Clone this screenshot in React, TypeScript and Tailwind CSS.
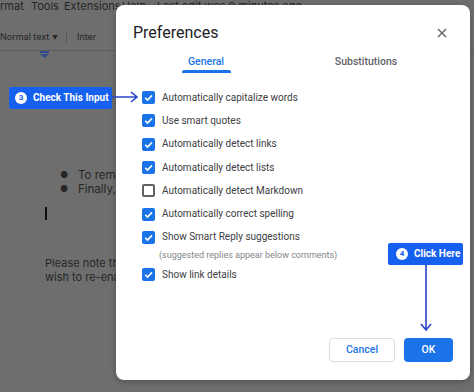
import React from "react";

const items: { label: string; checked: boolean }[] = [
  { label: "Automatically capitalize words", checked: true },
  { label: "Use smart quotes", checked: true },
  { label: "Automatically detect links", checked: true },
  { label: "Automatically detect lists", checked: true },
  { label: "Automatically detect Markdown", checked: false },
  { label: "Automatically correct spelling", checked: true },
  { label: "Show Smart Reply suggestions", checked: true },
];

function Box({ checked }: { checked: boolean }) {
  if (!checked)
    return <div className="w-[13px] h-[13px] rounded-[2px] border-2 border-[#5f6368] shrink-0" />;
  return (
    <div className="w-[13px] h-[13px] rounded-[2px] bg-[#1a73e8] shrink-0 flex items-center justify-center">
      <svg width="13" height="13" viewBox="0 0 13 13">
        <path d="M3.2 6.8l2.3 2.3L10 4.4" fill="none" stroke="white" strokeWidth="1.6" />
      </svg>
    </div>
  );
}

function Row({ label, checked }: { label: string; checked: boolean }) {
  return (
    <div className="h-[23.3px] flex items-center gap-[7px]">
      <Box checked={checked} />
      <span className="text-[10px] text-[#3c4043] leading-none">{label}</span>
    </div>
  );
}

export default function App() {
  return (
    <div className="relative w-[474px] h-[392px] overflow-hidden bg-[#6e6e6e] font-['Roboto',sans-serif]">
      {/* background document */}
      <div className="flex flex-col text-[#262626] font-['Inter',sans-serif]">
        <div className="-mt-[1px] h-[14px] flex items-center text-[11px] whitespace-nowrap">
          <span className="w-[31px]">rmat</span>
          <span className="w-[33px]">Tools</span>
          <span className="w-[58px]">Extensions</span>
          <span className="w-[35px]">Help</span>
          <span>Last edit was 9 minutes ago</span>
        </div>
        <div className="mt-[17px] h-[14px] flex items-center text-[9px] whitespace-nowrap">
          <span className="w-[52px]">Normal text</span>
          <span className="text-[6px] w-[14px]">▼</span>
          <span className="w-px h-[12px] bg-[#5a5a5a] mr-[10px]" />
          <span>Inter</span>
        </div>
        <div className="mt-[6px] h-px bg-[#5e5e5e]" />
        <div className="h-[8px] pl-[40px] flex items-start">
          <svg width="9" height="7" viewBox="0 0 9 7">
            <rect x="0" y="0" width="9" height="2" fill="#2d4a8a" />
            <path d="M0 3h9L4.5 7z" fill="#2d4a8a" />
          </svg>
        </div>
        <div className="mt-[109px] ml-[60px] w-[56px] overflow-hidden flex flex-col text-[11.5px] leading-[14px] whitespace-nowrap">
          <div className="flex items-center"><span className="w-[18px] shrink-0 text-[9px]">●</span>To remo</div>
          <div className="flex items-center"><span className="w-[18px] shrink-0 text-[9px]">●</span>Finally, c</div>
        </div>
        <div className="mt-[11px] ml-[45px] w-[1.5px] h-[13px] bg-[#111]" />
        <div className="mt-[36px] ml-[45px] w-[71px] overflow-hidden text-[11px] leading-[14px] whitespace-nowrap">
          <div>Please note that</div>
          <div>wish to re-enable</div>
        </div>
      </div>

      {/* dialog */}
      <div className="absolute left-[116px] top-[5px] w-[354px] h-[375px] bg-white rounded-[8px] shadow-[0_2px_6px_rgba(0,0,0,0.25)] flex flex-col">
        <div className="pt-[16px] pl-[17px] pr-[23px] flex items-center justify-between">
          <span className="text-[16px] leading-[24px] text-[#202124]">Preferences</span>
          <svg width="10" height="10" viewBox="0 0 10 10">
            <path d="M1 1l8 8M9 1l-8 8" stroke="#5f6368" strokeWidth="1.4" />
          </svg>
        </div>
        <div className="mt-[7px] pl-[10px] flex">
          <div className="relative w-[160px] h-[21px] flex justify-center pt-[2px]">
            <span className="text-[10.5px] leading-[16px] font-medium text-[#1a73e8]">General</span>
            <div className="absolute bottom-0 left-[56px] w-[49px] h-[3px] rounded-t-[2px] bg-[#1a73e8]" />
          </div>
          <div className="w-[160px] h-[21px] flex justify-center pt-[2px]">
            <span className="text-[10.5px] leading-[16px] font-medium text-[#5f6368]">Substitutions</span>
          </div>
        </div>
        <div className="mt-[13px] pl-[26px] flex flex-col">
          {items.map((it) => (
            <Row key={it.label} label={it.label} checked={it.checked} />
          ))}
          <div className="h-[12px] pl-[17px] text-[9px] leading-[12px] text-[#80868b]">
            (suggested replies appear below comments)
          </div>
          <div className="mt-[2px]">
            <Row label="Show link details" checked />
          </div>
        </div>
        <div className="mt-auto pb-[18px] pr-[17px] flex justify-end gap-[9px]">
          <div className="w-[66px] h-[24px] rounded-[4px] border border-[#dadce0] flex items-center justify-center text-[10.5px] font-medium text-[#1a73e8]">
            Cancel
          </div>
          <div className="w-[49px] h-[24px] rounded-[4px] bg-[#1a73e8] flex items-center justify-center text-[10.5px] font-medium text-white">
            OK
          </div>
        </div>
      </div>

      {/* annotation 3 */}
      <div className="absolute left-[9px] top-[87px] w-[103px] h-[22px] rounded-[2px] bg-[#1660f0] flex items-center pl-[6px] gap-[6px]">
        <div className="w-[12px] h-[12px] rounded-full bg-white flex items-center justify-center text-[8px] font-bold text-[#1660f0] leading-none">3</div>
        <span className="text-[10px] font-bold text-white leading-none whitespace-nowrap">Check This Input</span>
      </div>
      <svg className="absolute left-[112px] top-[90px]" width="28" height="14" viewBox="0 0 28 14">
        <path d="M0 7h25M19 2l6 5-6 5" fill="none" stroke="#2a45c8" strokeWidth="1.6" />
      </svg>

      {/* annotation 4 */}
      <div className="absolute left-[388px] top-[243px] w-[75px] h-[22px] rounded-[2px] bg-[#1660f0] flex items-center pl-[8px] gap-[6px]">
        <div className="w-[12px] h-[12px] rounded-full bg-white flex items-center justify-center text-[8px] font-bold text-[#1660f0] leading-none">4</div>
        <span className="text-[10px] font-bold text-white leading-none whitespace-nowrap">Click Here</span>
      </div>
      <svg className="absolute left-[419px] top-[265px]" width="14" height="68" viewBox="0 0 14 68">
        <path d="M7 0v65M2 59l5 6 5-6" fill="none" stroke="#2a45c8" strokeWidth="1.6" />
      </svg>
    </div>
  );
}
